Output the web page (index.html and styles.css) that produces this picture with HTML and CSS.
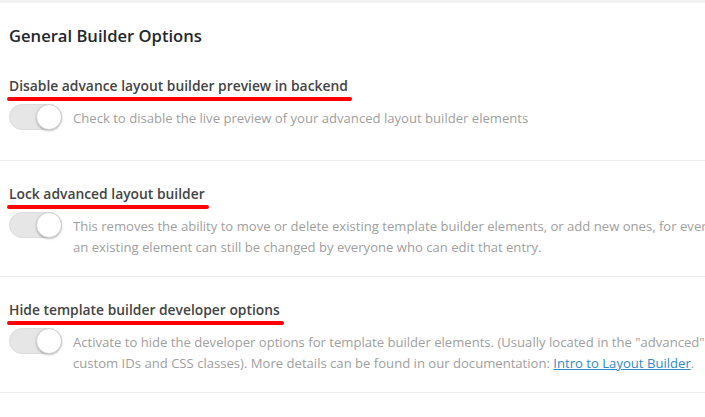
FILE: index.html
```html
<!DOCTYPE html>
<html lang="en">
<head>
    <meta charset="UTF-8">
    <title>General Builder Options</title>
    <link rel="stylesheet" href="styles.css">
</head>
<body>
    <div class="topbar"></div>

    <div class="options-page">
        <h2 class="page-title">General Builder Options</h2>

        <!-- Option 1 -->
        <div class="option-row first">
            <h4 class="option-title"><span class="marked">Disable advance layout builder preview in backend</span></h4>
            <div class="option-body">
                <span class="switch"><span class="knob"></span></span>
                <p class="option-desc">Check to disable the live preview of your advanced layout builder elements</p>
            </div>
        </div>

        <!-- Option 2 -->
        <div class="option-row">
            <h4 class="option-title"><span class="marked">Lock advanced layout builder</span></h4>
            <div class="option-body">
                <span class="switch"><span class="knob"></span></span>
                <p class="option-desc">This removes the ability to move or delete existing template builder elements, or add new ones, for everyone who is not an administrator. The content of<br>an existing element can still be changed by everyone who can edit that entry.</p>
            </div>
        </div>

        <!-- Option 3 -->
        <div class="option-row">
            <h4 class="option-title"><span class="marked">Hide template builder developer options</span></h4>
            <div class="option-body">
                <span class="switch"><span class="knob"></span></span>
                <p class="option-desc">Activate to hide the developer options for template builder elements. (Usually located in the "advanced" tab of the element and containing things like<br>custom IDs and CSS classes). More details can be found in our documentation: <a href="#">Intro to Layout Builder</a>.</p>
            </div>
        </div>
    </div>
</body>
</html>
```

FILE: styles.css
```css
body {
    margin: 0;
    padding: 0;
    background-color: #fff;
    font-family: 'Open Sans', 'Noto Sans', sans-serif;
    overflow: hidden;
    width: 705px;
    height: 417px;
}

.topbar {
    height: 3px;
    background-color: #f1f1f1;
}

.options-page {
    padding: 0 0 0 9px;
    width: 1200px;
}

.page-title {
    font-size: 16.6px;
    font-weight: 600;
    color: #23282d;
    margin: 0;
    padding-top: 21px;
    line-height: 24px;
}

.option-row {
    border-bottom: 1px solid #ececec;
    margin-left: -9px;
    padding: 23px 0 18px 9px;
}

.option-row.first {
    padding-top: 28px;
    padding-bottom: 30px;
}

.option-title {
    margin: 0;
    font-size: 13.85px;
    font-weight: 600;
    color: #444;
    line-height: 20px;
}

/* rote Markierung unter dem Titel */
.marked {
    display: inline-block;
    position: relative;
    padding-bottom: 4px;
    vertical-align: top;
}

.marked::after {
    content: "";
    position: absolute;
    left: -2px;
    right: -4px;
    bottom: -1px;
    height: 4px;
    border-radius: 2px;
    background-color: #f00;
}

.option-body {
    display: flex;
    align-items: flex-start;
    gap: 11px;
    margin-top: 4px;
}

.switch {
    flex: none;
    position: relative;
    width: 51px;
    height: 24px;
    border: 1px solid #dcdcdc;
    border-radius: 14px;
    background-color: #e6e6e6;
}

.knob {
    position: absolute;
    top: -1px;
    right: -1px;
    width: 24px;
    height: 24px;
    border: 1px solid #d2d2d2;
    border-radius: 50%;
    background-color: #fff;
    box-shadow: 0 1px 2px rgba(0, 0, 0, 0.25);
}

.option-desc {
    margin: 0;
    padding-top: 4px;
    font-size: 13.1px;
    line-height: 21px;
    color: #a0a0a0;
    white-space: nowrap;
}

.option-desc a {
    color: #2f8ac8;
}
```
